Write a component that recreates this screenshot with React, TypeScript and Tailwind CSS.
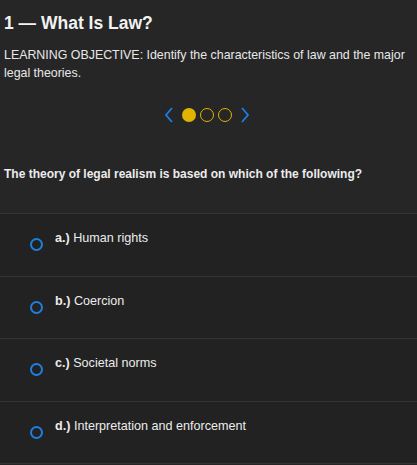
export default function App() {
  const options = [
    { key: 'a.)', text: 'Human rights' },
    { key: 'b.)', text: 'Coercion' },
    { key: 'c.)', text: 'Societal norms' },
    { key: 'd.)', text: 'Interpretation and enforcement' },
  ];

  return (
    <div
      className="w-[417px] h-[465px] overflow-hidden bg-[#262626] text-white"
      style={{ fontFamily: '"Liberation Sans", Arial, sans-serif' }}
    >
      <div className="px-[4px]">
        <h1 className="pt-[12px] text-[17.5px] font-bold leading-[22px] text-[#f2f2f2]">1 — What Is Law?</h1>
        <p className="mt-[12px] text-[12.4px] leading-[18px] text-[#e8e8e8]">
          LEARNING OBJECTIVE: Identify the characteristics of law and the major legal theories.
        </p>

        {/* pager */}
        <div className="mt-[25px] flex items-center justify-center gap-[4px] pr-[4px]">
          <svg width="10" height="16" viewBox="0 0 10 16" className="mr-[4px]">
            <path d="M8 1 L2 8 L8 15" fill="none" stroke="#1e7fe0" strokeWidth="1.8" />
          </svg>
          <span className="w-[14px] h-[14px] rounded-full bg-[#e0b400]" />
          <span className="w-[14px] h-[14px] rounded-full border-[1.5px] border-[#e0b400]" />
          <span className="w-[14px] h-[14px] rounded-full border-[1.5px] border-[#e0b400]" />
          <svg width="10" height="16" viewBox="0 0 10 16" className="ml-[4px]">
            <path d="M2 1 L8 8 L2 15" fill="none" stroke="#1e7fe0" strokeWidth="1.8" />
          </svg>
        </div>

        <p className="mt-[42px] text-[12px] leading-[18px] font-bold text-[#ececec]">
          The theory of legal realism is based on which of the following?
        </p>
      </div>

      <div className="mt-[30px] border-t border-[#343434] bg-[#222222]">
        {options.map(o => (
          <div key={o.key} className="flex h-[62.5px] border-b border-[#343434]">
            <div className="w-[55px] flex items-center">
              <span className="ml-[30px] w-[13px] h-[13px] rounded-full border-2 border-[#1e7fe0]" />
            </div>
            <div className="pt-[15px] text-[12.6px] leading-[18px] text-[#ececec]">
              <span className="font-bold">{o.key}</span> {o.text}
            </div>
          </div>
        ))}
      </div>
    </div>
  );
}
